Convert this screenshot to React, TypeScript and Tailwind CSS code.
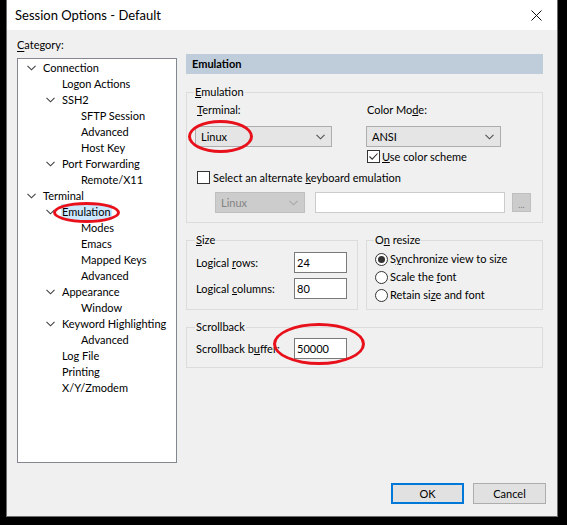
import React from 'react';

type Node = [number, boolean, string];

const TREE: Node[] = [
  [0, true, 'Connection'],
  [1, false, 'Logon Actions'],
  [1, true, 'SSH2'],
  [2, false, 'SFTP Session'],
  [2, false, 'Advanced'],
  [2, false, 'Host Key'],
  [1, true, 'Port Forwarding'],
  [2, false, 'Remote/X11'],
  [0, true, 'Terminal'],
  [1, true, 'Emulation'],
  [2, false, 'Modes'],
  [2, false, 'Emacs'],
  [2, false, 'Mapped Keys'],
  [2, false, 'Advanced'],
  [1, true, 'Appearance'],
  [2, false, 'Window'],
  [1, true, 'Keyword Highlighting'],
  [2, false, 'Advanced'],
  [1, false, 'Log File'],
  [1, false, 'Printing'],
  [1, false, 'X/Y/Zmodem'],
];

const PAD = ['pl-[9px]', 'pl-[28px]', 'pl-[47px]'];

function Chevron({ color = '#404040' }: { color?: string }) {
  return (
    <svg width="9" height="6" viewBox="0 0 9 6" className="shrink-0">
      <path d="M0.5 0.8 L4.5 4.8 L8.5 0.8" fill="none" stroke={color} strokeWidth="1.1" />
    </svg>
  );
}

function Ellipse({ cls }: { cls: string }) {
  return <span className={`absolute border-[3px] border-[#e8111b] rounded-[50%] pointer-events-none ${cls}`} />;
}

function Select({ value, w, disabled }: { value: string; w: string; disabled?: boolean }) {
  return (
    <div
      className={`${w} h-[21px] flex items-center justify-between pl-[5px] pr-[6px] border ${
        disabled ? 'bg-[#cccccc] border-[#bfbfbf] text-[#838383]' : 'bg-[#e5e5e5] border-[#adadad]'
      }`}
    >
      <span>{value}</span>
      <Chevron color={disabled ? '#a8a8a8' : '#505050'} />
    </div>
  );
}

function Input({ value }: { value: string }) {
  return (
    <div className="w-[53px] h-[21px] bg-white border border-[#7a7a7a] flex items-center pl-[2px]">{value}</div>
  );
}

function Checkbox({ checked }: { checked?: boolean }) {
  return (
    <span className="w-[13px] h-[13px] border border-[#333] bg-white flex items-center justify-center shrink-0">
      {checked && (
        <svg width="11" height="11" viewBox="0 0 11 11">
          <path d="M1.5 5.5 L4.2 8.2 L9.5 2.5" fill="none" stroke="#333" strokeWidth="1.1" />
        </svg>
      )}
    </span>
  );
}

function Radio({ checked }: { checked?: boolean }) {
  return (
    <span className="w-[13px] h-[13px] rounded-full border border-[#333] bg-white flex items-center justify-center shrink-0">
      {checked && <span className="w-[7px] h-[7px] rounded-full bg-[#333]" />}
    </span>
  );
}

export default function App() {
  return (
    <div className="w-[567px] h-[525px] bg-black pl-[6px] font-['Lato',sans-serif] text-[11px] leading-[16px] text-black">
      <div className="w-[552px] h-[517px] bg-[#f0f0f0] border-x border-b border-[#6e6e6e] flex flex-col">
        <div className="h-[30px] bg-white flex items-center justify-between pl-[8px] pr-[15px]">
          <span className="text-[13px]">Session Options - Default</span>
          <svg width="11" height="11" viewBox="0 0 11 11">
            <path d="M0.5 0.5 L10.5 10.5 M10.5 0.5 L0.5 10.5" stroke="#111" strokeWidth="1" />
          </svg>
        </div>

        <div className="flex-1 flex flex-col px-[10px]">
          <div className="flex gap-[9px]">
            <div className="w-[160px] flex flex-col">
              <div className="mt-[7px]">
                <u className="underline-offset-2">C</u>ategory:
              </div>
              <div className="mt-[5px] h-[405px] border border-[#828790] bg-white pt-[1px]">
                {TREE.map(([lvl, chev, label], i) => (
                  <div key={i} className={`h-[16px] flex items-center gap-[7px] ${PAD[lvl]}`}>
                    {chev ? <Chevron /> : <span className="w-[9px] shrink-0" />}
                    {label === 'Emulation' ? (
                      <span className="relative bg-[#cce8ff] -ml-[1px] px-[1px]">
                        {label}
                        <Ellipse cls="-left-[8px] -top-[2px] w-[67px] h-[21px]" />
                      </span>
                    ) : (
                      <span>{label}</span>
                    )}
                  </div>
                ))}
              </div>
            </div>

            <div className="w-[357px] flex flex-col">
              <div className="mt-[24px] h-[20px] bg-[#bfcddb] flex items-center pl-[6px] font-bold">Emulation</div>

              <fieldset className="mt-[10px] border border-[#dcdcdc] pb-[9px]">
                <legend className="ml-[7px] px-[1px]">
                  <u>E</u>mulation
                </legend>
                <div className="flex">
                  <div className="ml-[8px] w-[137px]">
                    <div className="mt-[2px] pl-[2px]">
                      <u>T</u>erminal:
                    </div>
                    <div className="relative mt-[8px]">
                      <Select value="Linux" w="w-[137px]" />
                      <Ellipse cls="-left-[7px] -top-[6px] w-[65px] h-[33px]" />
                    </div>
                  </div>
                  <div className="ml-[34px] w-[135px]">
                    <div className="mt-[2px] pl-[1px]">
                      Color Mo<u>d</u>e:
                    </div>
                    <div className="mt-[8px]">
                      <Select value="ANSI" w="w-[135px]" />
                    </div>
                    <div className="mt-[3px] h-[13px] flex items-center gap-[2px] pl-[1px]">
                      <Checkbox checked />
                      <span>
                        <u>U</u>se color scheme
                      </span>
                    </div>
                  </div>
                </div>
                <div className="mt-[8px] h-[13px] flex items-center gap-[3px] pl-[10px]">
                  <Checkbox />
                  <span>
                    Select an alternate <u>k</u>eyboard emulation
                  </span>
                </div>
                <div className="mt-[8px] flex items-start pl-[28px]">
                  <Select value="Linux" w="w-[90px]" disabled />
                  <div className="ml-[10px] w-[190px] h-[21px] bg-white border border-[#cccccc]" />
                  <div className="ml-[7px] mt-[1px] w-[19px] h-[19px] bg-[#cccccc] border border-[#bfbfbf] flex items-end justify-center text-[9px] leading-[12px] text-[#838383]">
                    ...
                  </div>
                </div>
              </fieldset>

              <div className="mt-[9px] flex gap-[8px]">
                <fieldset className="w-[172px] border border-[#dcdcdc] pb-[10px]">
                  <legend className="ml-[8px] px-[1px]">
                    <u>S</u>ize
                  </legend>
                  <div className="mt-[4px] flex items-center">
                    <span className="pl-[9px] w-[107px]">
                      Logical <u>r</u>ows:
                    </span>
                    <Input value="24" />
                  </div>
                  <div className="mt-[5px] flex items-center">
                    <span className="pl-[9px] w-[107px]">
                      Logical <u>c</u>olumns:
                    </span>
                    <Input value="80" />
                  </div>
                </fieldset>
                <fieldset className="w-[177px] border border-[#dcdcdc] pb-[4px]">
                  <legend className="ml-[7px] px-[1px]">
                    O<u>n</u> resize
                  </legend>
                  <div className="mt-[2px] flex flex-col pl-[8px]">
                    <div className="h-[18px] flex items-center gap-[2px]">
                      <Radio checked />
                      <span>
                        S<u>y</u>nchronize view to size
                      </span>
                    </div>
                    <div className="h-[18px] flex items-center gap-[2px]">
                      <Radio />
                      <span>
                        Scale the <u>f</u>ont
                      </span>
                    </div>
                    <div className="h-[18px] flex items-center gap-[2px]">
                      <Radio />
                      <span>
                        Retain si<u>z</u>e and font
                      </span>
                    </div>
                  </div>
                </fieldset>
              </div>

              <fieldset className="mt-[9px] border border-[#dcdcdc] pb-[8px]">
                <legend className="ml-[8px] px-[1px]">Scrollback</legend>
                <div className="mt-[3px] flex items-center">
                  <span className="pl-[9px] w-[107px]">
                    Scrollback b<u>u</u>ffer:
                  </span>
                  <div className="relative">
                    <Input value="50000" />
                    <Ellipse cls="-left-[21px] -top-[15px] w-[92px] h-[42px]" />
                  </div>
                </div>
              </fieldset>
            </div>
          </div>

          <div className="mt-[20px] flex justify-end gap-[9px] pr-[1px]">
            <button className="w-[73px] h-[21px] bg-[#e1e1e1] border-2 border-[#0078d7] flex items-center justify-center">
              OK
            </button>
            <button className="w-[73px] h-[21px] bg-[#e1e1e1] border border-[#adadad] flex items-center justify-center">
              Cancel
            </button>
          </div>
        </div>
      </div>
    </div>
  );
}
